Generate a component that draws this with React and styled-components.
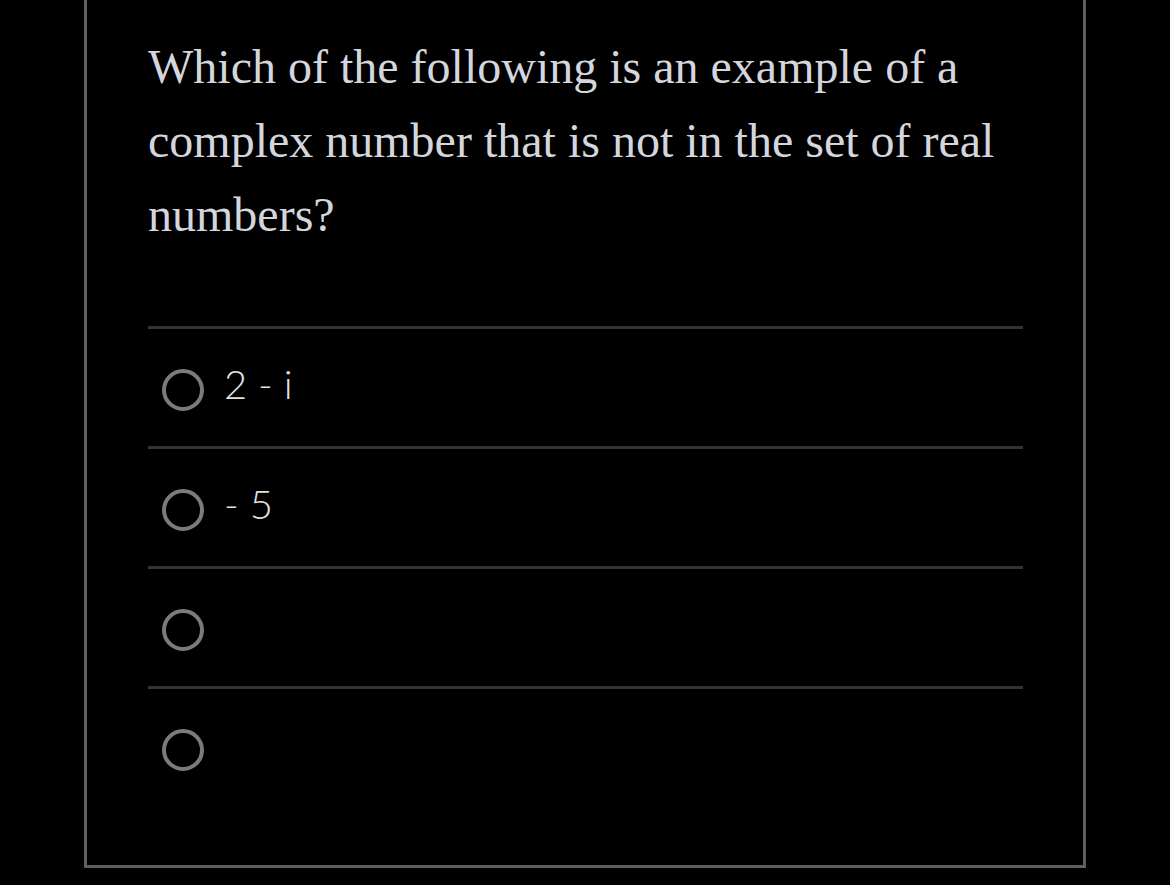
import React from 'react'
import styled, { createGlobalStyle } from 'styled-components'

const Global = createGlobalStyle`
html, body {
  margin: 0;
  padding: 0;
  background: #000;
}
`
const Page = styled.div`
width: 1170px;
height: 885px;
background: #000;
overflow: hidden;`;
const Card = styled.div`
box-sizing: border-box;
margin-left: 84px;
width: 1002px;
height: 868px;
border: 3px solid #5f5f5f;
border-top: none;
padding: 30px 60px 0 61px;`;
const Question = styled.p`
margin: 0 0 74px 0;
font-family: "Liberation Serif", "Times New Roman", serif;
font-size: 48px;
line-height: 74px;
color: #d3d6dd;`;
const Options = styled.div`
display: flex;
flex-direction: column;`;
const Option = styled.label`
display: flex;
align-items: center;
gap: 20px;
height: 113px;
border-top: 3px solid #333;
padding: 4px 0 0 14px;
box-sizing: content-box;`;
const Radio = styled.span`
box-sizing: border-box;
width: 42px;
height: 42px;
border-radius: 50%;
border: 4px solid #7b7b7c;
flex-shrink: 0;`;
const Label = styled.span`
font-family: Lato, "Noto Sans", sans-serif;
font-weight: 300;
font-size: 40px;
color: #e2e2e2;
margin-top: -12px;`;

const options = ['2 - i', '- 5', '', '']

const App = () => {
  return (
    <Page>
      <Global />
      <Card>
        <Question>
          Which of the following is an example of a complex number that is not in the set of real numbers?
        </Question>
        <Options>
          {options.map((o, i) => (
            <Option key={i}>
              <Radio />
              <Label>{o}</Label>
            </Option>
          ))}
        </Options>
      </Card>
    </Page>
  )
}

export default App
